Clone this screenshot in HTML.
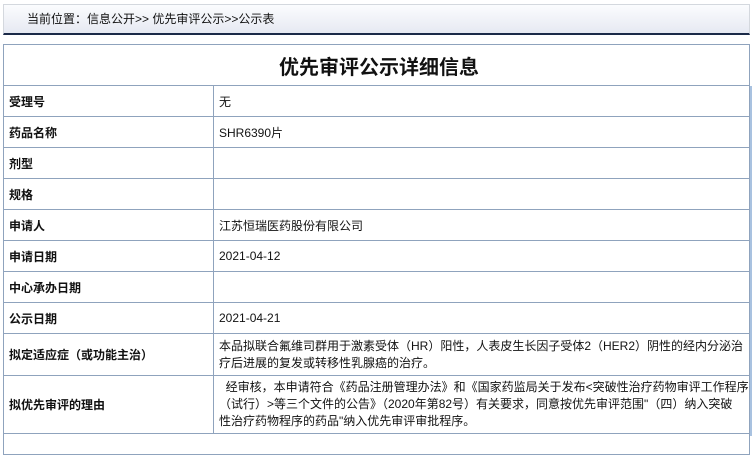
<!DOCTYPE html><html><head><meta charset="utf-8"><style>
body{margin:0;width:755px;height:443px;background:#fff;font-family:"Liberation Sans","Noto Sans CJK SC",sans-serif;position:relative;overflow:hidden}
.hd{position:absolute;left:3px;top:4px;width:745px;height:28px;border:1px solid #d4d8de;border-bottom:2px solid #1b2a48;background:linear-gradient(#fbfcfe,#e6e9f2);font-size:12px;line-height:28px;color:#111}
.hd span{margin-left:23px}
table{position:absolute;left:3px;top:44px;width:746px;border-collapse:collapse;font-size:12px;color:#111;table-layout:fixed}
td{border:1px solid #8fa3bd;padding:0 0 0 5px;height:30px}
td.l{font-weight:bold}
td.t{text-align:center;font-size:20px;font-weight:bold;height:40px}
.sb{position:absolute;left:749px;top:86px;width:3px;height:350px;background:#a9c2e0}
.nw{white-space:nowrap;overflow:hidden}
</style></head><body>
<div class="hd"><span>当前位置：信息公开&gt;&gt; 优先审评公示&gt;&gt;公示表</span></div>
<div class="sb"></div>
<table>
<colgroup><col style="width:210px"><col style="width:536px"></colgroup>
<tr><td class="t" colspan="2">优先审评公示详细信息</td></tr>
<tr><td class="l">受理号</td><td>无</td></tr>
<tr><td class="l">药品名称</td><td>SHR6390片</td></tr>
<tr><td class="l">剂型</td><td></td></tr>
<tr><td class="l">规格</td><td></td></tr>
<tr><td class="l">申请人</td><td>江苏恒瑞医药股份有限公司</td></tr>
<tr><td class="l">申请日期</td><td>2021-04-12</td></tr>
<tr><td class="l">中心承办日期</td><td></td></tr>
<tr><td class="l">公示日期</td><td>2021-04-21</td></tr>
<tr><td class="l" style="height:41px">拟定适应症（或功能主治）</td><td style="line-height:17px">本品拟联合氟维司群用于激素受体（HR）阳性，人表皮生长因子受体2（HER2）阴性的经内分泌治疗后进展的复发或转移性乳腺癌的治疗。</td></tr>
<tr><td class="l" style="height:57px">拟优先审评的理由</td><td class="nw" style="line-height:17px">&nbsp;&nbsp;经审核，本申请符合《药品注册管理办法》和《国家药监局关于发布&lt;突破性治疗药物审评工作程序<br>（试行）&gt;等三个文件的公告》（2020年第82号）有关要求，同意按优先审评范围"（四）纳入突破<br>性治疗药物程序的药品"纳入优先审评审批程序。</td></tr>
<tr><td colspan="2" style="height:20px"></td></tr>
</table>
</body></html>
